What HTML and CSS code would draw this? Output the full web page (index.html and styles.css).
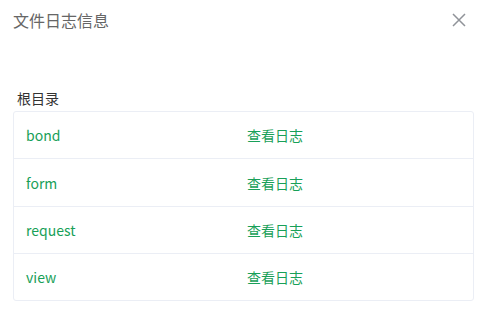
FILE: index.html
```html
<!DOCTYPE html>
<html lang="zh">
<head>
<meta charset="utf-8">
<link rel="stylesheet" href="styles.css">
</head>
<body>
<div class="dialog">
  <div class="header">
    <span class="title">文件日志信息</span>
    <span class="close">
      <svg width="14" height="14" viewBox="0 0 14 14"><path d="M1 1 L13 13 M13 1 L1 13" stroke="#909399" stroke-width="1.5" fill="none"/></svg>
    </span>
  </div>
  <div class="label">根目录</div>
  <div class="table">
    <div class="row"><span class="name">bond</span><span class="action">查看日志</span></div>
    <div class="row tall"><span class="name">form</span><span class="action">查看日志</span></div>
    <div class="row"><span class="name">request</span><span class="action">查看日志</span></div>
    <div class="row"><span class="name">view</span><span class="action">查看日志</span></div>
  </div>
</div>
</body>
</html>
```
FILE: styles.css
```css
html, body {
  margin: 0;
  background: #fff;
  font-family: "Noto Sans CJK SC", "Noto Sans", sans-serif;
}
.dialog {
  width: 491px;
  height: 315px;
  box-sizing: border-box;
  padding: 8px 17px 0 13px;
}
.header {
  display: flex;
  justify-content: space-between;
  align-items: center;
  height: 24px;
}
.title {
  font-size: 16px;
  color: #666;
  line-height: 24px;
}
.close {
  display: flex;
  margin-right: 8px;
}
.label {
  margin-top: 56px;
  padding-left: 4px;
  font-size: 14px;
  line-height: 20px;
  color: #333;
}
.table {
  margin-top: 3px;
  border: 1px solid #ebeef5;
  border-radius: 3px;
}
.row {
  display: grid;
  grid-template-columns: 221px 1fr;
  height: 46px;
  align-items: center;
  padding-left: 12px;
  border-top: 1px solid #ebeef5;
  font-size: 14px;
  color: #18a058;
}
.row:first-child {
  border-top: none;
}
.row.tall { height: 47px; }
```
